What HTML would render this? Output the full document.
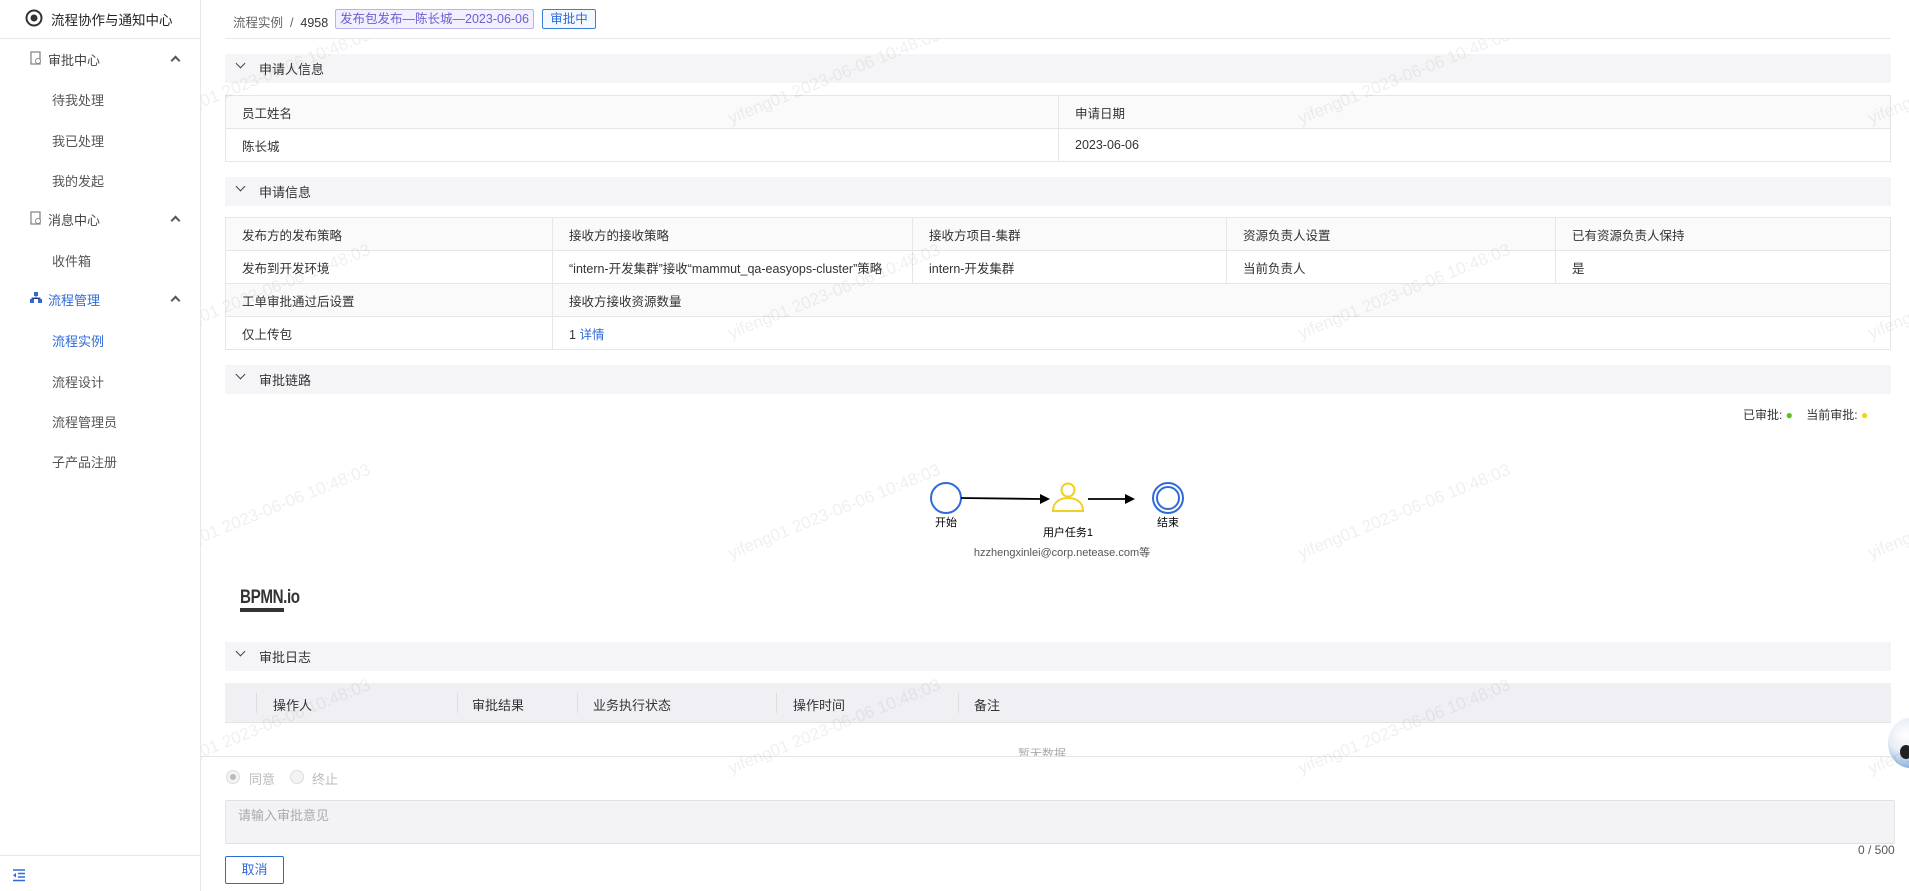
<!DOCTYPE html>
<html><head><meta charset="utf-8">
<style>
*{box-sizing:border-box;margin:0;padding:0}
body{width:1909px;height:891px;overflow:hidden;background:#fff;font-family:"Liberation Sans","Noto Sans CJK SC",sans-serif;font-size:13px;color:#333;position:relative}
.a{position:absolute;white-space:nowrap}
.side{position:absolute;left:0;top:0;width:201px;height:891px;border-right:1px solid #e8e8ec;background:#fff}
.mi{position:absolute;left:52px;color:#555;font-size:13px}
.mh{position:absolute;left:48px;color:#444;font-size:13px}
.car{position:absolute;left:172px;width:7px;height:7px;border-left:2px solid #555;border-top:2px solid #555;transform:rotate(45deg)}
.sec{position:absolute;left:225px;width:1666px;height:29px;background:#f5f5f7;}
.sec span{position:absolute;left:34px;top:5px;font-size:13px;color:#333}
.sec i{position:absolute;left:12px;top:6px;width:7px;height:7px;border-right:1.5px solid #444;border-bottom:1.5px solid #444;transform:rotate(45deg)}
table{border-collapse:collapse;position:absolute;left:225px;width:1666px}
td{border:1px solid #e6e6ea;padding:0 16px;font-size:12.5px;color:#333;height:33px}
tr.h td{background:#fafafa}
.wm{position:absolute;left:201px;top:39px;right:0;bottom:0;pointer-events:none}
</style></head><body>

<div class="side">
  <svg class="a" style="left:25px;top:9px" width="18" height="18" viewBox="0 0 18 18"><circle cx="9" cy="9" r="7.5" fill="none" stroke="#333" stroke-width="2"/><circle cx="9" cy="9" r="3.5" fill="#333"/></svg>
  <div class="a" style="left:51px;top:9px;font-size:13.5px;color:#222">流程协作与通知中心</div>
  <div class="a" style="left:0;top:38px;width:201px;border-top:1px solid #e8e8ec"></div>

  <svg class="a" style="left:30px;top:51px" width="12" height="14"><rect x="1" y="1" width="9" height="12" fill="none" stroke="#888" stroke-width="1.3"/><circle cx="8" cy="10" r="2.5" fill="#fff" stroke="#888"/></svg>
  <div class="mh" style="top:50px">审批中心</div><div class="car" style="top:57px"></div>
  <div class="mi" style="top:90px">待我处理</div>
  <div class="mi" style="top:131px">我已处理</div>
  <div class="mi" style="top:171px">我的发起</div>
  <svg class="a" style="left:30px;top:211px" width="12" height="14"><rect x="1" y="1" width="9" height="12" fill="none" stroke="#888" stroke-width="1.3"/><circle cx="8" cy="10" r="2.5" fill="#fff" stroke="#888"/></svg>
  <div class="mh" style="top:210px">消息中心</div><div class="car" style="top:217px"></div>
  <div class="mi" style="top:251px">收件箱</div>
  <svg class="a" style="left:30px;top:292px" width="12" height="12"><rect x="4" y="0" width="4" height="4" fill="#2f6bd8"/><rect x="0" y="7" width="4" height="4" fill="#2f6bd8"/><rect x="8" y="7" width="4" height="4" fill="#2f6bd8"/><path d="M6 4v2M2 7V6h8v1" stroke="#2f6bd8"/></svg>
  <div class="mh" style="top:290px;color:#2f6bd8">流程管理</div><div class="car" style="top:297px"></div>
  <div class="mi" style="top:331px;color:#2f6bd8">流程实例</div>
  <div class="mi" style="top:372px">流程设计</div>
  <div class="mi" style="top:412px">流程管理员</div>
  <div class="mi" style="top:452px">子产品注册</div>
  <div class="a" style="left:0;top:855px;width:201px;border-top:1px solid #e8e8ec"></div>
  <svg class="a" style="left:12px;top:868px" width="14" height="14"><path d="M1 2h12M6 5.5h7M6 9h7M1 12.5h12" stroke="#2f6bd8" stroke-width="1.5"/><path d="M4 5l-3 2.3 3 2.3z" fill="#2f6bd8"/></svg>
</div>

<div class="a" style="left:233px;top:12px;font-size:12.5px;color:#666">流程实例 &nbsp;/&nbsp; <span style="color:#333">4958</span></div>
<div class="a" style="left:335px;top:9px;width:199px;height:20px;line-height:18px;text-align:center;border:1px solid #b8b2ee;background:#f2f0ff;color:#6a5fd0;font-size:12.5px;border-radius:2px;overflow:hidden">发布包发布—陈长城—2023-06-06</div>
<div class="a" style="left:542px;top:9px;width:54px;height:20px;line-height:18px;text-align:center;border:1px solid #3a80d8;background:#f3f8ff;color:#2f6bd8;font-size:12.5px;border-radius:2px">审批中</div>
<div class="a" style="left:225px;top:38px;width:1666px;border-top:1px solid #e8e8ec"></div>

<div class="sec" style="top:54px"><i></i><span>申请人信息</span></div>
<table style="top:95px">
<tr class="h"><td style="width:833px">员工姓名</td><td>申请日期</td></tr>
<tr><td>陈长城</td><td>2023-06-06</td></tr>
</table>

<div class="sec" style="top:177px"><i></i><span>申请信息</span></div>
<table style="top:217px">
<tr class="h"><td style="width:327px">发布方的发布策略</td><td style="width:360px">接收方的接收策略</td><td style="width:314px">接收方项目-集群</td><td style="width:329px">资源负责人设置</td><td>已有资源负责人保持</td></tr>
<tr><td>发布到开发环境</td><td>“intern-开发集群”接收“mammut_qa-easyops-cluster”策略</td><td>intern-开发集群</td><td>当前负责人</td><td>是</td></tr>
<tr class="h"><td>工单审批通过后设置</td><td colspan="4">接收方接收资源数量</td></tr>
<tr><td>仅上传包</td><td colspan="4">1 <span style="color:#2f6bd8">详情</span></td></tr>
</table>

<div class="sec" style="top:365px"><i></i><span>审批链路</span></div>
<div class="a" style="left:1743px;top:406px;font-size:12px;color:#333">已审批: <span style="color:#52c41a">●</span> &nbsp;&nbsp; 当前审批: <span style="color:#f5d31a">●</span></div>

<svg class="a" style="left:900px;top:470px" width="320" height="100">
<circle cx="46" cy="28" r="15" fill="none" stroke="#2f6bd8" stroke-width="2"/>
<path d="M61 28L140 29" stroke="#000" stroke-width="1.8"/><path d="M140 24l10 5-10 5z" fill="#000"/>
<circle cx="168" cy="20" r="6.5" fill="none" stroke="#f0d020" stroke-width="2"/>
<path d="M153 41c0-9 7-13 15-13s15 4 15 13z" fill="none" stroke="#f0d020" stroke-width="2"/>
<path d="M188 29H225" stroke="#000" stroke-width="1.8"/><path d="M225 24l10 5-10 5z" fill="#000"/>
<circle cx="268" cy="28" r="15" fill="none" stroke="#2f6bd8" stroke-width="2"/>
<circle cx="268" cy="28" r="11" fill="none" stroke="#2f6bd8" stroke-width="2"/>
<text x="46" y="56" font-size="11" text-anchor="middle" font-family="Liberation Sans,Noto Sans CJK SC,sans-serif">开始</text>
<text x="268" y="56" font-size="11" text-anchor="middle" font-family="Liberation Sans,Noto Sans CJK SC,sans-serif">结束</text>
<text x="168" y="66" font-size="11" text-anchor="middle" font-family="Liberation Sans,Noto Sans CJK SC,sans-serif">用户任务1</text>
<text x="162" y="86" font-size="11" fill="#555" text-anchor="middle" font-family="Liberation Sans,Noto Sans CJK SC,sans-serif">hzzhengxinlei@corp.netease.com等</text>
</svg>

<div class="a" style="left:240px;top:587px;font-size:19px;font-weight:bold;color:#333;letter-spacing:-0.5px;transform:scaleX(0.8);transform-origin:left">BPMN.io</div>
<div class="a" style="left:240px;top:608px;width:44px;height:4px;background:#333"></div>

<div class="sec" style="top:642px"><i></i><span>审批日志</span></div>
<div class="a" style="left:225px;top:683px;width:1666px;height:40px;background:#f0f0f4;border-bottom:1px solid #e4e4e8"></div>
<div class="a" style="left:256px;top:693px;height:20px;border-left:1px solid #ddd"></div>
<div class="a" style="left:457px;top:693px;height:20px;border-left:1px solid #ddd"></div>
<div class="a" style="left:577px;top:693px;height:20px;border-left:1px solid #ddd"></div>
<div class="a" style="left:776px;top:693px;height:20px;border-left:1px solid #ddd"></div>
<div class="a" style="left:958px;top:693px;height:20px;border-left:1px solid #ddd"></div>
<div class="a" style="left:273px;top:695px">操作人</div>
<div class="a" style="left:472px;top:695px">审批结果</div>
<div class="a" style="left:593px;top:695px">业务执行状态</div>
<div class="a" style="left:793px;top:695px">操作时间</div>
<div class="a" style="left:974px;top:695px">备注</div>
<div class="a" style="left:1018px;top:745px;color:#aaa;font-size:12px;height:11px;overflow:hidden">暂无数据</div>

<div class="a" style="left:201px;top:756px;width:1708px;height:135px;background:#fff;border-top:1px solid #e4e4e8"></div>
<div class="a" style="left:226px;top:770px;width:14px;height:14px;border:1px solid #ddd;border-radius:50%;background:#f3f3f3"></div>
<div class="a" style="left:230px;top:774px;width:6px;height:6px;border-radius:50%;background:#bbb"></div>
<div class="a" style="left:249px;top:769px;color:#bbb">同意</div>
<div class="a" style="left:290px;top:770px;width:14px;height:14px;border:1px solid #ddd;border-radius:50%;background:#f3f3f3"></div>
<div class="a" style="left:312px;top:769px;color:#bbb">终止</div>
<div class="a" style="left:225px;top:800px;width:1670px;height:44px;background:#f3f3f5;border:1px solid #e2e2e6;border-radius:2px"></div>
<div class="a" style="left:238px;top:805px;color:#aaa">请输入审批意见</div>
<div class="a" style="left:1858px;top:843px;font-size:12px;color:#555">0 / 500</div>
<div class="a" style="left:225px;top:856px;width:59px;height:28px;border:1px solid #2f6bd8;border-radius:2px;color:#2f6bd8;text-align:center;line-height:26px">取消</div>

<div class="a" style="left:1888px;top:718px;width:44px;height:50px;border-radius:50%;background:radial-gradient(circle at 40% 35%,#fff 0,#e8eef5 40%,#8fb6e0 75%,#3a7fc8 100%)"></div>
<div class="a" style="left:1900px;top:745px;width:12px;height:14px;border-radius:50%;background:#222"></div>

<svg class="wm" width="1708" height="852">
<defs><pattern id="p" width="570" height="435" patternUnits="userSpaceOnUse" x="-60" y="-25">
<text x="20" y="110" transform="rotate(-22 20 110)" font-size="17" fill="rgba(0,0,0,0.06)" font-family="Liberation Sans,sans-serif">yifeng01 2023-06-06 10:48:03</text>
<text x="20" y="325" transform="rotate(-22 20 325)" font-size="17" fill="rgba(0,0,0,0.06)" font-family="Liberation Sans,sans-serif">yifeng01 2023-06-06 10:48:03</text>
</pattern></defs>
<rect width="1708" height="852" fill="url(#p)"/>
</svg>
</body></html>
